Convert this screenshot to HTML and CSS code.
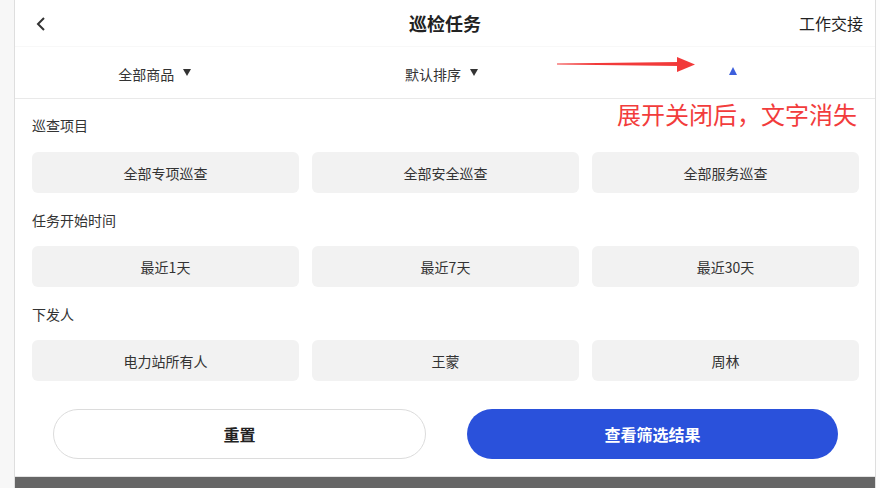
FILE: index.html
```html
<!DOCTYPE html>
<html lang="zh-CN">
<head>
<meta charset="utf-8">
<title>巡检任务</title>
<link rel="stylesheet" href="styles.css">
</head>
<body>
<div class="app">
  <div class="gutter"></div>
  <div class="main">
    <header class="topbar">
      <span class="back">
        <svg width="10" height="14" viewBox="0 0 10 14"><path d="M8 1 L2 7 L8 13" fill="none" stroke="#333" stroke-width="2"/></svg>
      </span>
      <h1 class="title">巡检任务</h1>
      <span class="handover">工作交接</span>
    </header>
    <nav class="tabs">
      <div class="tab"><span>全部商品</span><i class="caret"></i></div>
      <div class="tab"><span>默认排序</span><i class="caret"></i></div>
      <div class="tab tab-toggle"><i class="caret-up"></i></div>
    </nav>
    <section class="panel">
      <div class="label first">巡查项目</div>
      <div class="options">
        <div class="opt">全部专项巡查</div>
        <div class="opt">全部安全巡查</div>
        <div class="opt">全部服务巡查</div>
      </div>
      <div class="label">任务开始时间</div>
      <div class="options">
        <div class="opt">最近1天</div>
        <div class="opt">最近7天</div>
        <div class="opt">最近30天</div>
      </div>
      <div class="label">下发人</div>
      <div class="options">
        <div class="opt">电力站所有人</div>
        <div class="opt">王蒙</div>
        <div class="opt">周林</div>
      </div>
    </section>
    <div class="actions">
      <button class="btn reset">重置</button>
      <button class="btn confirm">查看筛选结果</button>
    </div>
    <div class="mask"></div>
  </div>
  <div class="edge"></div>
</div>

<svg class="note-arrow" width="150" height="24" viewBox="0 0 150 24">
  <polygon points="2,8.5 124,7 124,11 2,9.5" fill="#f23a3a"/>
  <polygon points="122,2 140,9.5 122,17" fill="#f23a3a"/>
</svg>
<div class="note-text">展开关闭后，文字消失</div>
</body>
</html>
```

FILE: styles.css
```css
html, body {
  margin: 0;
  padding: 0;
}
body {
  width: 880px;
  height: 488px;
  overflow: hidden;
  position: relative;
  font-family: "Noto Sans CJK SC", "Noto Sans", sans-serif;
  color: #333;
  background: #fff;
}
.app {
  display: flex;
  height: 488px;
}
.gutter {
  width: 14px;
  background: #f7f7f7;
  border-right: 1px solid #dedede;
}
.main {
  width: 860px;
  display: flex;
  flex-direction: column;
  border-right: 1px solid #dedede;
  background: #fff;
}
.edge {
  flex: 1;
  background: #fdfdfd;
}

/* top bar */
.topbar {
  height: 47px;
  display: flex;
  align-items: center;
  justify-content: space-between;
  position: relative;
  padding: 0 12px 0 21px;
  border-bottom: 1px solid #f8f8f8;
  box-sizing: border-box;
}
.back {
  display: flex;
  align-items: center;
  padding-top: 1px;
}
.title {
  position: absolute;
  left: 0;
  right: 0;
  text-align: center;
  margin: 0;
  font-size: 18px;
  font-weight: 700;
  color: #222;
  pointer-events: none;
  line-height: 47px;
}
.handover {
  font-size: 16px;
  color: #222;
  position: relative;
}

/* dropdown tabs */
.tabs {
  height: 51px;
  display: grid;
  grid-template-columns: repeat(3, 1fr);
  border-bottom: 1px solid #e9e9e9;
}
.tab {
  display: flex;
  align-items: center;
  justify-content: center;
  gap: 9px;
  font-size: 14px;
  color: #333;
  padding: 3px 7px 0 0;
}
.tab-toggle {
  padding: 0 0 0 2px;
}
.caret {
  width: 0;
  height: 0;
  border-left: 4.5px solid transparent;
  border-right: 4.5px solid transparent;
  border-top: 7px solid #333;
  margin-top: -3px;
}
.caret-up {
  width: 0;
  height: 0;
  border-left: 4.5px solid transparent;
  border-right: 4.5px solid transparent;
  border-bottom: 8px solid #3d5fdc;
  margin-top: -3px;
}

/* filter panel */
.panel {
  padding: 0 16px 0 17px;
}
.label {
  font-size: 14px;
  line-height: 20px;
  padding-top: 17px;
  margin-bottom: 16px;
  color: #333;
}
.label.first {
  padding-top: 16px;
  margin-bottom: 17px;
}
.options {
  display: grid;
  grid-template-columns: repeat(3, 1fr);
  gap: 13px;
}
.opt {
  height: 41px;
  background: #f2f2f2;
  border-radius: 6px;
  display: flex;
  align-items: center;
  justify-content: center;
  font-size: 14px;
  color: #333;
}

/* bottom actions */
.actions {
  display: flex;
  gap: 41px;
  padding: 28px 37px 0 38px;
  height: 95px;
  box-sizing: border-box;
}
.btn {
  flex: 1;
  height: 50px;
  border-radius: 25px;
  font-family: inherit;
  font-size: 16px;
  font-weight: 700;
  cursor: pointer;
}
.reset {
  background: #fff;
  border: 1px solid #dcdcdc;
  color: #222;
}
.confirm {
  background: #2a51db;
  border: none;
  color: #fff;
}
.mask {
  flex: 1;
  background: #666;
  border-top: 1px solid #e4e4e4;
}

/* annotation overlay */
.note-arrow {
  position: absolute;
  left: 555px;
  top: 55px;
}
.note-text {
  position: absolute;
  left: 617px;
  top: 98px;
  font-size: 24px;
  line-height: 32px;
  color: #f23c3c;
  white-space: nowrap;
}
```
